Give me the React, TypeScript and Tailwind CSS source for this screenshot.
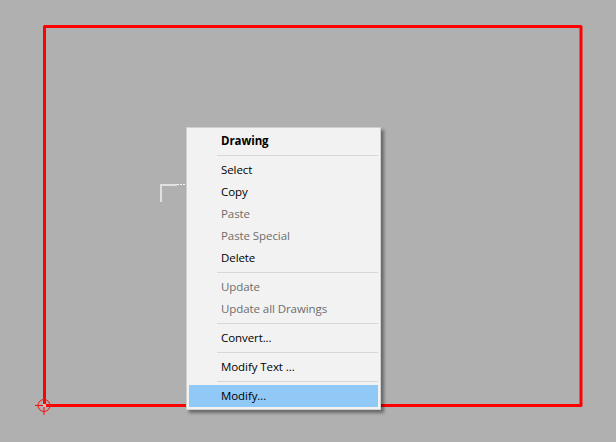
const items = [
  { label: "Drawing", bold: true },
  { sep: true },
  { label: "Select" },
  { label: "Copy" },
  { label: "Paste", disabled: true },
  { label: "Paste Special", disabled: true },
  { label: "Delete" },
  { sep: true },
  { label: "Update", disabled: true },
  { label: "Update all Drawings", disabled: true },
  { sep: true },
  { label: "Convert..." },
  { sep: true },
  { label: "Modify Text ..." },
  { sep: true },
  { label: "Modify...", active: true },
];

function ContextMenu() {
  return (
    <div className="absolute left-[186px] top-[127px] w-[195px] border border-[#d0d0d0] bg-[#f2f2f2] p-[2px] shadow-[3px_3px_3px_rgba(0,0,0,0.4)]">
      {items.map((item, i) =>
        item.sep ? (
          <div key={i} className="flex h-[7px] items-center pl-[28px]">
            <div className="h-px w-full bg-[#d7d7d7]" />
          </div>
        ) : (
          <div
            key={i}
            className={`flex h-[22px] items-center pl-[32px] ${item.active ? "bg-[#90c8f6]" : ""} ${
              item.disabled ? "text-[#6d6d6d]" : "text-black"
            } ${item.bold ? "font-bold" : ""}`}
          >
            {item.label}
          </div>
        )
      )}
    </div>
  );
}

export default function App() {
  return (
    <div className="relative h-[442px] w-[616px] overflow-hidden bg-[#b0b0b0] font-['Open_Sans',sans-serif] text-[11.5px] tracking-[-0.08px]">
      {/* drawing frame + origin marker */}
      <svg className="absolute inset-0" width="616" height="442" viewBox="0 0 616 442">
        <path d="M44.5 405.5V26.5H581V405.5H44.5" fill="none" stroke="#ff0000" strokeWidth="3" strokeLinejoin="round" />
        <circle cx="44" cy="405.5" r="6" fill="none" stroke="#f01010" strokeWidth="1" />
        <path d="M35 405.5H53M44 397V415" stroke="#f01010" strokeWidth="1" />
        <rect x="43" y="404" width="3" height="3" fill="#ffb0b0" />
        <path d="M160 185H177M161 185V202" stroke="#e0e0e0" strokeWidth="2" fill="none" />
        <path d="M177 184.5H186" stroke="#f4f4f4" strokeWidth="1" strokeDasharray="2 1" fill="none" />
      </svg>
      <ContextMenu />
    </div>
  );
}
